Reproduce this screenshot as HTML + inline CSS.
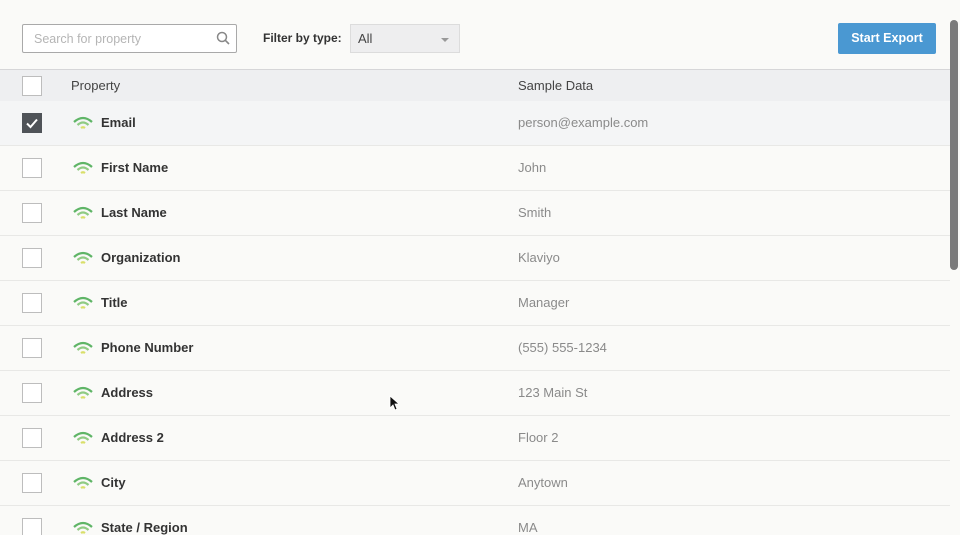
<!DOCTYPE html>
<html><head><style>
*{box-sizing:border-box;margin:0;padding:0}
html,body{width:960px;height:535px;overflow:hidden}
body{background:#fafaf8;font-family:"Liberation Sans",sans-serif;position:relative}
.search{position:absolute;left:22px;top:24px;width:215px;height:29px;border:1px solid #a9a9a9;border-radius:2px;background:#fff;font-size:12.5px;color:#b5b5b5;padding:7px 11px}
.lbl{position:absolute;left:263px;top:31px;font-size:12px;font-weight:bold;color:#333}
.sel{position:absolute;left:350px;top:24px;width:110px;height:29px;background:#eeeeef;border:1px solid #dcdcdc;font-size:13px;color:#444;padding:6px 7px}
.sel:after{content:"";position:absolute;right:10px;top:13px;border:4px solid transparent;border-top:4px solid #999}
.btn{position:absolute;left:838px;top:23px;width:98px;height:31px;background:#4a98d2;border-radius:2px;color:#fff;font-size:12.5px;font-weight:bold;text-align:center;line-height:30px}
.head{position:absolute;left:0;top:69px;width:950px;height:33px;background:#eeeff1;border-top:1px solid #d6d6d8;border-bottom:1px solid #e2e2e2;font-size:13px;color:#444}
.row{position:absolute;left:0;width:950px;height:45px;border-bottom:1px solid #e8e8e6;font-size:13px}
.cb{position:absolute;left:22px;width:20px;height:20px;border:1px solid #bdbdbd;background:#fff}
.name{position:absolute;left:101px;font-weight:bold;color:#333}
.data{position:absolute;left:518px;color:#8a8a8a}
.ic{position:absolute;left:72px}
.sb{position:absolute;left:950px;top:20px;width:8px;height:250px;background:#7a7a7a;border-radius:4px}
</style></head><body>
<div class="search">Search for property
<svg style="position:absolute;right:6px;top:6px" width="14" height="14" viewBox="0 0 14 14"><circle cx="6" cy="6" r="4.5" fill="none" stroke="#888" stroke-width="1.5"/><line x1="9.3" y1="9.3" x2="13" y2="13" stroke="#888" stroke-width="1.6"/></svg></div>
<div class="lbl">Filter by type:</div>
<div class="sel">All</div>
<div class="btn">Start Export</div>
<div class="head"><div class="cb" style="top:6px"></div><span style="position:absolute;left:71px;top:8px">Property</span><span style="position:absolute;left:518px;top:8px">Sample Data</span></div>
<div id="rows"></div>
<div class="sb"></div>
<svg style="position:absolute;left:389px;top:395px" width="10" height="16" viewBox="0 0 10 16"><path d="M1 1 L1 13 L4 10 L6 15 L8 14 L6 9 L10 9 Z" fill="#111" stroke="#fff" stroke-width="0.8"/></svg>
<script>
var d=[["Email","person@example.com"],["First Name","John"],["Last Name","Smith"],["Organization","Klaviyo"],["Title","Manager"],["Phone Number","(555) 555-1234"],["Address","123 Main St"],["Address 2","Floor 2"],["City","Anytown"],["State / Region","MA"]];
var h="";
d.forEach(function(r,i){
var t=101+i*45;
var chk=i==0?'<div class="cb" style="top:12px;background:#4f5358;border-color:#4f5358"><svg width="18" height="18" viewBox="0 0 18 18"><path d="M4 9.5 L7.5 13 L14 5.5" fill="none" stroke="#fff" stroke-width="2"/></svg></div>':'<div class="cb" style="top:12px"></div>';
h+='<div class="row" style="top:'+t+'px;'+(i==0?'background:#f4f5f6':'')+'">'+chk+
'<svg class="ic" style="top:14px" width="22" height="16" viewBox="0 0 22 16"><path d="M2 7 Q11 -1 20 7" fill="none" stroke="#5fb567" stroke-width="2.2"/><path d="M5.5 10 Q11 5 16.5 10" fill="none" stroke="#8fcb84" stroke-width="2.2"/><path d="M9 13 Q11 11.5 13 13" fill="none" stroke="#d9df6a" stroke-width="2.2"/></svg>'+
'<span class="name" style="top:14px">'+r[0]+'</span><span class="data" style="top:14px">'+r[1]+'</span></div>';
});
document.getElementById("rows").innerHTML=h;
</script>
</body></html>
